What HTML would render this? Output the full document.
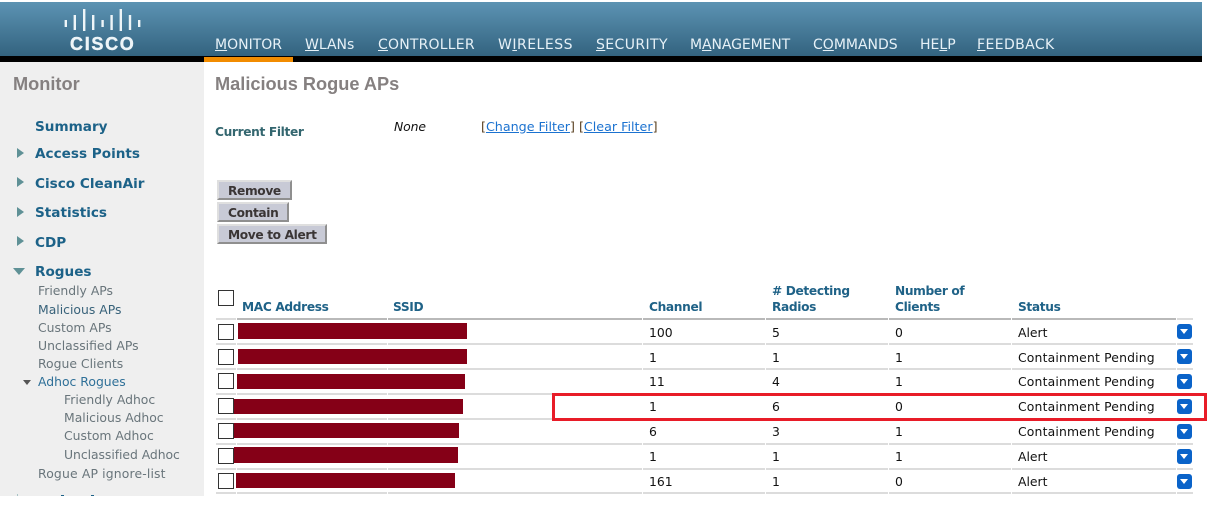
<!DOCTYPE html>
<html lang="en">
<head>
<meta charset="utf-8">
<title>Malicious Rogue APs</title>
<style>
html,body{margin:0;padding:0;background:#fff}
body{position:relative;width:1220px;height:522px;overflow:hidden;font-family:"DejaVu Sans","Liberation Sans",sans-serif}
.a,.t,.n,.s,.ss,.h,.d{position:absolute;white-space:nowrap}
.a{display:block}
#hdr{left:0;top:2px;width:1202px;height:54px;background:linear-gradient(#5c93b3,#33637f)}
#blk{left:0;top:56px;width:1202px;height:6px;background:#000}
#org{left:204px;top:57px;width:89px;height:5px;background:#f28c00}
#side{left:0;top:62px;width:204px;height:434px;background:#efefef}
.n{top:37px;font-size:14px;line-height:17px;color:#e6f1f7}
.n u{text-decoration:underline}
.s{left:35px;font-size:13.6px;line-height:16px;font-weight:bold;color:#1c6288}
.ss{font-size:12.4px;line-height:15px;color:#69757b}
.h{font-size:12.2px;line-height:15px;font-weight:bold;color:#1f6287;letter-spacing:-.35px;margin-top:1px}
.d{font-size:12.4px;line-height:15px;color:#111}
.b{position:absolute;left:217px;box-sizing:border-box;height:20px;background:#c8cad6;border:2px solid;border-color:#dfdfdf #8f8f8f #8f8f8f #dfdfdf;font-size:12.2px;font-weight:bold;line-height:19px;color:#3a3535;padding-left:9px;white-space:nowrap;letter-spacing:-.35px}
.l{position:absolute;height:2px;background:#dcdcdc}
.hl{background:#b9b9b9}
.r{position:absolute;background:#850017}
.c{position:absolute;left:218px;width:16px;height:16px;box-sizing:border-box;border:1.4px solid #333;background:#fff}
.v{position:absolute;left:1177px;width:15px;height:15px;border-radius:3px;background:#0a63c9}
.v:after{content:"";position:absolute;left:3px;top:5px;border-left:4.5px solid transparent;border-right:4.5px solid transparent;border-top:5px solid #fff}
.tr{position:absolute;width:0;height:0;left:17px;border-top:5px solid transparent;border-bottom:5px solid transparent;border-left:7px solid #5f9196}
.cp{letter-spacing:.16px}
</style>
</head>
<body>
<div class="a" id="hdr"></div>
<div class="a" id="blk"></div>
<div class="a" id="org"></div>
<div class="a" id="side"></div>

<svg class="a" style="left:60px;top:5px" width="85" height="30" viewBox="0 0 85 30">
<g fill="#eef5f8">
<rect x="4.6" y="15" width="2.4" height="7"/><rect x="13.6" y="10" width="2.4" height="15"/><rect x="23" y="4" width="2.4" height="22"/>
<rect x="32" y="10" width="2.4" height="15"/><rect x="41.4" y="15" width="2.4" height="7"/><rect x="50.4" y="10" width="2.4" height="15"/>
<rect x="59.6" y="4" width="2.4" height="22"/><rect x="68.8" y="10" width="2.4" height="15"/><rect x="78" y="15" width="2.4" height="7"/>
</g></svg>
<div class="t" style="left:70px;top:34px;font:bold 18px/20px 'Liberation Sans',sans-serif;letter-spacing:1.7px;color:#eef5f8;-webkit-text-stroke:.4px #eef5f8">CISCO</div>

<div class="n" style="left:215px"><u>M</u>ONITOR</div>
<div class="n" style="left:305px"><u>W</u>LANs</div>
<div class="n" style="left:378px;letter-spacing:.2px"><u>C</u>ONTROLLER</div>
<div class="n" style="left:498px;letter-spacing:.5px">W<u>I</u>RELESS</div>
<div class="n" style="left:596px;letter-spacing:.4px"><u>S</u>ECURITY</div>
<div class="n" style="left:690px;letter-spacing:-.1px">M<u>A</u>NAGEMENT</div>
<div class="n" style="left:813px">C<u>O</u>MMANDS</div>
<div class="n" style="left:920px">HE<u>L</u>P</div>
<div class="n" style="left:977px;letter-spacing:.4px"><u>F</u>EEDBACK</div>

<div class="t" style="left:13px;top:74px;font:bold 18.2px/20px 'Liberation Sans',sans-serif;color:#858080">Monitor</div>
<div class="s" style="top:119px">Summary</div>
<div class="tr" style="top:148px"></div><div class="s" style="top:146px">Access Points</div>
<div class="tr" style="top:177px"></div><div class="s" style="top:176px">Cisco CleanAir</div>
<div class="tr" style="top:207px"></div><div class="s" style="top:205px">Statistics</div>
<div class="tr" style="top:236px"></div><div class="s" style="top:235px">CDP</div>
<div class="a" style="left:13px;top:268px;width:0;height:0;border-left:6px solid transparent;border-right:6px solid transparent;border-top:7px solid #5f9196"></div>
<div class="s" style="top:264px">Rogues</div>
<div class="ss" style="left:38px;top:283px">Friendly APs</div>
<div class="ss" style="left:38px;top:302px;color:#38627a">Malicious APs</div>
<div class="ss" style="left:38px;top:320px">Custom APs</div>
<div class="ss" style="left:38px;top:338px">Unclassified APs</div>
<div class="ss" style="left:38px;top:356px">Rogue Clients</div>
<div class="a" style="left:23px;top:380px;width:0;height:0;border-left:4.5px solid transparent;border-right:4.5px solid transparent;border-top:5px solid #555"></div>
<div class="ss" style="left:38px;top:374px;color:#2f7098">Adhoc Rogues</div>
<div class="ss" style="left:64px;top:392px">Friendly Adhoc</div>
<div class="ss" style="left:64px;top:410px">Malicious Adhoc</div>
<div class="ss" style="left:64px;top:428px">Custom Adhoc</div>
<div class="ss" style="left:64px;top:447px;letter-spacing:-.05px">Unclassified Adhoc</div>
<div class="ss" style="left:38px;top:466px;letter-spacing:.15px">Rogue AP ignore-list</div>
<div class="a" style="left:17px;top:494px;width:1px;height:2px;background:#a9c4c6"></div>
<div class="a" style="left:61px;top:495px;width:3px;height:1px;background:#1c6288"></div>
<div class="a" style="left:91px;top:495px;width:3px;height:1px;background:#1c6288"></div>

<div class="t" style="left:215px;top:74px;font:bold 18.2px/20px 'Liberation Sans',sans-serif;color:#858080">Malicious Rogue APs</div>
<div class="t" style="left:215px;top:125px;font-size:12.2px;line-height:15px;font-weight:bold;color:#33666f;letter-spacing:-.35px">Current Filter</div>
<div class="t" style="left:394px;top:119px;font-size:12.4px;line-height:15px;font-style:italic;color:#111;letter-spacing:-.1px">None</div>
<div class="t" style="left:481px;top:119px;font-size:12.7px;line-height:15px;color:#5a4020">[<span style="color:#1b72d0;text-decoration:underline">Change Filter</span>] [<span style="color:#1b72d0;text-decoration:underline">Clear Filter</span>]</div>

<div class="b" style="top:180px;width:75px">Remove</div>
<div class="b" style="top:202px;width:72px">Contain</div>
<div class="b" style="top:224px;width:110px">Move to Alert</div>

<div class="h" style="left:242px;top:299px">MAC Address</div>
<div class="h" style="left:393px;top:299px">SSID</div>
<div class="h" style="left:649px;top:299px">Channel</div>
<div class="h" style="left:772px;top:283px"># Detecting</div>
<div class="h" style="left:772px;top:299px">Radios</div>
<div class="h" style="left:895px;top:283px">Number of</div>
<div class="h" style="left:895px;top:299px">Clients</div>
<div class="h" style="left:1018px;top:299px">Status</div>

<div class="l" style="left:216px;top:318px;width:20px"></div>
<div class="l hl" style="left:237px;top:318px;width:150px"></div>
<div class="l hl" style="left:388px;top:318px;width:254px"></div>
<div class="l hl" style="left:643px;top:318px;width:122px"></div>
<div class="l hl" style="left:766px;top:318px;width:122px"></div>
<div class="l hl" style="left:889px;top:318px;width:122px"></div>
<div class="l hl" style="left:1012px;top:318px;width:164px"></div>
<div class="l" style="left:1177px;top:318px;width:16px"></div>

<!-- row separators -->
<div class="l" style="left:216px;top:343px;width:20px"></div><div class="l" style="left:237px;top:343px;width:150px"></div><div class="l" style="left:388px;top:343px;width:254px"></div><div class="l" style="left:643px;top:343px;width:122px"></div><div class="l" style="left:766px;top:343px;width:122px"></div><div class="l" style="left:889px;top:343px;width:122px"></div><div class="l" style="left:1012px;top:343px;width:164px"></div><div class="l" style="left:1177px;top:343px;width:16px"></div>
<div class="l" style="left:216px;top:368px;width:20px"></div><div class="l" style="left:237px;top:368px;width:150px"></div><div class="l" style="left:388px;top:368px;width:254px"></div><div class="l" style="left:643px;top:368px;width:122px"></div><div class="l" style="left:766px;top:368px;width:122px"></div><div class="l" style="left:889px;top:368px;width:122px"></div><div class="l" style="left:1012px;top:368px;width:164px"></div><div class="l" style="left:1177px;top:368px;width:16px"></div>
<div class="l" style="left:216px;top:393px;width:20px"></div><div class="l" style="left:237px;top:393px;width:150px"></div><div class="l" style="left:388px;top:393px;width:254px"></div><div class="l" style="left:643px;top:393px;width:122px"></div><div class="l" style="left:766px;top:393px;width:122px"></div><div class="l" style="left:889px;top:393px;width:122px"></div><div class="l" style="left:1012px;top:393px;width:164px"></div><div class="l" style="left:1177px;top:393px;width:16px"></div>
<div class="l" style="left:216px;top:418px;width:20px"></div><div class="l" style="left:237px;top:418px;width:150px"></div><div class="l" style="left:388px;top:418px;width:254px"></div><div class="l" style="left:643px;top:418px;width:122px"></div><div class="l" style="left:766px;top:418px;width:122px"></div><div class="l" style="left:889px;top:418px;width:122px"></div><div class="l" style="left:1012px;top:418px;width:164px"></div><div class="l" style="left:1177px;top:418px;width:16px"></div>
<div class="l" style="left:216px;top:443px;width:20px"></div><div class="l" style="left:237px;top:443px;width:150px"></div><div class="l" style="left:388px;top:443px;width:254px"></div><div class="l" style="left:643px;top:443px;width:122px"></div><div class="l" style="left:766px;top:443px;width:122px"></div><div class="l" style="left:889px;top:443px;width:122px"></div><div class="l" style="left:1012px;top:443px;width:164px"></div><div class="l" style="left:1177px;top:443px;width:16px"></div>
<div class="l" style="left:216px;top:468px;width:20px"></div><div class="l" style="left:237px;top:468px;width:150px"></div><div class="l" style="left:388px;top:468px;width:254px"></div><div class="l" style="left:643px;top:468px;width:122px"></div><div class="l" style="left:766px;top:468px;width:122px"></div><div class="l" style="left:889px;top:468px;width:122px"></div><div class="l" style="left:1012px;top:468px;width:164px"></div><div class="l" style="left:1177px;top:468px;width:16px"></div>
<div class="l" style="left:216px;top:492px;width:20px"></div><div class="l" style="left:237px;top:492px;width:150px"></div><div class="l" style="left:388px;top:492px;width:254px"></div><div class="l" style="left:643px;top:492px;width:122px"></div><div class="l" style="left:766px;top:492px;width:122px"></div><div class="l" style="left:889px;top:492px;width:122px"></div><div class="l" style="left:1012px;top:492px;width:164px"></div><div class="l" style="left:1177px;top:492px;width:16px"></div>

<!-- redaction bars -->
<div class="r" style="left:238px;top:323px;width:229px;height:16px"></div>
<div class="r" style="left:238px;top:349px;width:229px;height:15px"></div>
<div class="r" style="left:237px;top:374px;width:228px;height:15px"></div>
<div class="r" style="left:233px;top:399px;width:230px;height:15px"></div>
<div class="r" style="left:234px;top:423px;width:225px;height:15px"></div>
<div class="r" style="left:234px;top:447px;width:224px;height:16px"></div>
<div class="r" style="left:236px;top:473px;width:219px;height:15px"></div>

<div class="c" style="top:290px"></div>
<div class="c" style="top:324px"></div>
<div class="c" style="top:349px"></div>
<div class="c" style="top:373px"></div>
<div class="c" style="top:398px"></div>
<div class="c" style="top:423px"></div>
<div class="c" style="top:448px"></div>
<div class="c" style="top:473px"></div>

<div class="d" style="left:649px;top:325px">100</div><div class="d" style="left:772px;top:325px">5</div><div class="d" style="left:895px;top:325px">0</div><div class="d" style="left:1018px;top:325px">Alert</div>
<div class="d" style="left:649px;top:350px">1</div><div class="d" style="left:772px;top:350px">1</div><div class="d" style="left:895px;top:350px">1</div><div class="d cp" style="left:1018px;top:350px">Containment Pending</div>
<div class="d" style="left:649px;top:374px">11</div><div class="d" style="left:772px;top:374px">4</div><div class="d" style="left:895px;top:374px">1</div><div class="d cp" style="left:1018px;top:374px">Containment Pending</div>
<div class="d" style="left:649px;top:399px">1</div><div class="d" style="left:772px;top:399px">6</div><div class="d" style="left:895px;top:399px">0</div><div class="d cp" style="left:1018px;top:399px">Containment Pending</div>
<div class="d" style="left:649px;top:424px">6</div><div class="d" style="left:772px;top:424px">3</div><div class="d" style="left:895px;top:424px">1</div><div class="d cp" style="left:1018px;top:424px">Containment Pending</div>
<div class="d" style="left:649px;top:449px">1</div><div class="d" style="left:772px;top:449px">1</div><div class="d" style="left:895px;top:449px">1</div><div class="d" style="left:1018px;top:449px">Alert</div>
<div class="d" style="left:649px;top:474px">161</div><div class="d" style="left:772px;top:474px">1</div><div class="d" style="left:895px;top:474px">0</div><div class="d" style="left:1018px;top:474px">Alert</div>

<div class="v" style="top:324px"></div>
<div class="v" style="top:349px"></div>
<div class="v" style="top:374px"></div>
<div class="v" style="top:399px"></div>
<div class="v" style="top:424px"></div>
<div class="v" style="top:449px"></div>
<div class="v" style="top:474px"></div>

<div class="a" style="left:552px;top:393px;width:655px;height:28px;box-sizing:border-box;border:3px solid #e81c28"></div>
</body>
</html>
